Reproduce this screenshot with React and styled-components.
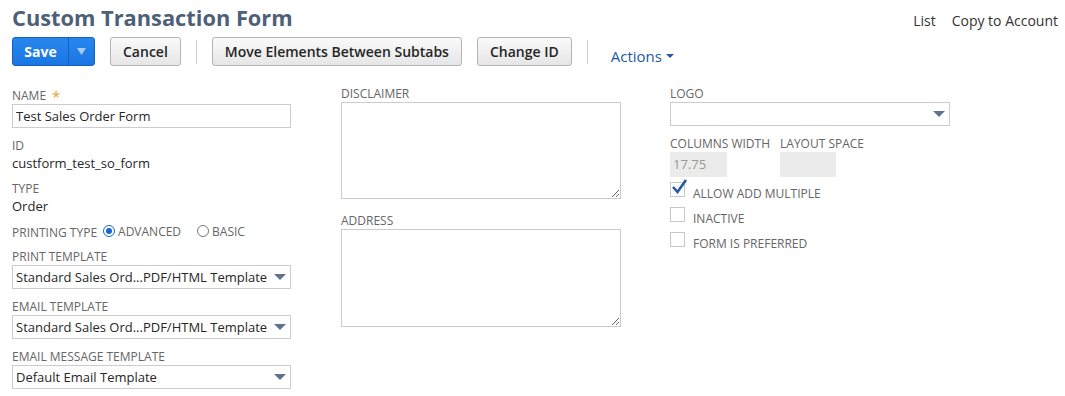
import React from 'react';
import styled, { createGlobalStyle } from 'styled-components';

const GlobalStyle = createGlobalStyle`
  html, body { margin: 0; padding: 0; background: #fff; }
  body { font-family: "Open Sans", sans-serif; color: #262626; }
  * { box-sizing: border-box; }
`;

const Page = styled.div`
  width: 1065px;
  height: 396px;
  padding: 3px 7px 0 12px;
  overflow: hidden;
`;

const Header = styled.div`
  display: flex;
  justify-content: space-between;
  align-items: baseline;
`;

const Title = styled.h1`
  margin: 0;
  font-size: 21.8px;
  line-height: 30px;
  font-weight: 700;
  color: #4d5f79;
`;

const HeaderLinks = styled.div`
  display: flex;
  gap: 16px;
  font-size: 14px;
`;

const HeaderLink = styled.a`
  color: #333;
  text-decoration: none;
`;

const Toolbar = styled.div`
  display: flex;
  align-items: center;
  gap: 15px;
  margin-top: 4px;
  height: 29px;
`;

const SplitButton = styled.div`
  display: flex;
  height: 29px;
  border: 1px solid #1760c2;
  border-radius: 3px;
  background: linear-gradient(#2886ee, #1a76e2);
  overflow: hidden;
`;

const SplitMain = styled.button`
  width: 55px;
  border: none;
  background: transparent;
  color: #fff;
  font-family: "Open Sans", sans-serif;
  font-size: 14px;
  font-weight: 700;
  padding: 0;
  cursor: pointer;
`;

const SplitArrow = styled.button`
  width: 26px;
  border: none;
  border-left: 1px solid #1760c2;
  background: transparent;
  display: flex;
  align-items: center;
  justify-content: center;
  padding: 0;
`;

const Button = styled.button`
  height: 29px;
  padding: 0 12px;
  border: 1px solid #b4b4b4;
  border-radius: 3px;
  background: linear-gradient(#fafafa, #e6e6e6);
  color: #262626;
  font-family: "Open Sans", sans-serif;
  font-size: 14px;
  font-weight: 600;
  cursor: pointer;
`;

const Separator = styled.div`
  width: 1px;
  height: 24px;
  background: #cfcfcf;
`;

const ActionsLink = styled.a`
  display: flex;
  align-items: center;
  gap: 4px;
  margin-left: 8px;
  padding-top: 8px;
  font-size: 15px;
  color: #24589f;
  text-decoration: none;
`;

const FormGrid = styled.div`
  display: grid;
  grid-template-columns: 329px 329px 1fr;
  margin-top: 19px;
`;

const Column = styled.div`
  display: flex;
  flex-direction: column;
  padding-top: ${(p) => p.$offset || 0}px;
`;

const Field = styled.div`
  display: flex;
  flex-direction: column;
  margin-bottom: ${(p) => (p.$gap ?? 9)}px;
`;

const Label = styled.div`
  font-size: 12px;
  line-height: 16px;
  padding-top: 1px;
  color: #666;
  white-space: nowrap;
`;

const Required = styled.span`
  color: #f0a030;
  font-size: 15px;
  line-height: 16px;
  margin-left: 6px;
  vertical-align: top;
`;

const Value = styled.div`
  margin-top: 1px;
  font-size: 13px;
  line-height: 16px;
  color: #262626;
`;

const TextInput = styled.input`
  width: 279px;
  height: 24px;
  border: 1px solid #ccc;
  padding: 0 3px;
  font-family: "Open Sans", sans-serif;
  font-size: 13px;
  color: #262626;
  outline: none;
`;

const SelectBox = styled.div`
  width: ${(p) => p.$width || 279}px;
  height: 24px;
  border: 1px solid #ccc;
  display: flex;
  align-items: center;
  justify-content: space-between;
  padding: 0 4px 0 3px;
  font-size: 13px;
  color: #262626;
  white-space: nowrap;
`;

const TextArea = styled.textarea`
  width: 280px;
  height: ${(p) => p.$height}px;
  border: 1px solid #ccc;
  font-family: "Open Sans", sans-serif;
  font-size: 13px;
  outline: none;
`;

const RadioRow = styled.div`
  display: flex;
  align-items: center;
  height: 16px;
  margin-bottom: 9px;
  font-size: 12px;
  color: #666;
`;

const RadioLabel = styled.span`
  line-height: 16px;
  padding-top: 4px;
  margin-right: 6px;
`;

const RadioOption = styled.label`
  display: flex;
  align-items: center;
  gap: 3px;
  margin-right: ${(p) => p.$spacing || 0}px;
  line-height: 16px;
  padding-top: 1px;
`;

const RadioCircle = styled.span`
  width: 12px;
  height: 12px;
  border-radius: 50%;
  border: ${(p) => (p.$checked ? '1.5px solid #1467cc' : '1px solid #777')};
  display: flex;
  align-items: center;
  justify-content: center;
  margin-top: -2px;
  &::after {
    content: '';
    display: ${(p) => (p.$checked ? 'block' : 'none')};
    width: 6px;
    height: 6px;
    border-radius: 50%;
    background: #1467cc;
  }
`;

const InlineFields = styled.div`
  display: flex;
  gap: 10px;
  margin-bottom: 5px;
`;

const ReadOnlyBox = styled.div`
  width: ${(p) => p.$width}px;
  height: 25px;
  background: #ebebeb;
  font-size: 13px;
  line-height: 25px;
  padding: 0 3px;
  color: #999;
`;

const CheckRow = styled.label`
  display: flex;
  align-items: flex-start;
  gap: 8px;
  height: 25px;
  font-size: 12px;
  color: #666;
`;

const CheckBox = styled.span`
  position: relative;
  width: 15px;
  height: 15px;
  border: 1px solid #c8c8c8;
  background: #fff;
  flex-shrink: 0;
`;

const CheckMark = styled.svg`
  position: absolute;
  left: 0;
  top: -5px;
  overflow: visible;
`;

const CheckText = styled.span`
  margin-top: 4px;
  line-height: 16px;
`;

const DownArrow = ({ color = '#5f7391', w = 12, h = 6 }) => (
  <svg width={w} height={h} viewBox="0 0 12 6">
    <path d="M0 0 L12 0 L6 6 Z" fill={color} />
  </svg>
);

const Select = ({ value, width }) => (
  <SelectBox $width={width}>
    <span>{value}</span>
    <DownArrow />
  </SelectBox>
);

const Checkbox = ({ checked, children }) => (
  <CheckRow>
    <CheckBox>
      {checked && (
        <CheckMark width="16" height="16" viewBox="0 0 16 16">
          <path d="M2 9 L6.5 14 L15 2" fill="none" stroke="#245aa3" strokeWidth="2.6" strokeLinejoin="miter" />
        </CheckMark>
      )}
    </CheckBox>
    <CheckText>{children}</CheckText>
  </CheckRow>
);

export default function App() {
  return (
    <>
      <GlobalStyle />
      <Page>
        <Header>
          <Title>Custom Transaction Form</Title>
          <HeaderLinks>
            <HeaderLink href="#">List</HeaderLink>
            <HeaderLink href="#">Copy to Account</HeaderLink>
          </HeaderLinks>
        </Header>

        <Toolbar>
          <SplitButton>
            <SplitMain>Save</SplitMain>
            <SplitArrow>
              <svg width="9" height="7" viewBox="0 0 9 7">
                <path d="M0 0 L9 0 L4.5 7 Z" fill="#a9c9f2" />
              </svg>
            </SplitArrow>
          </SplitButton>
          <Button>Cancel</Button>
          <Separator />
          <Button>Move Elements Between Subtabs</Button>
          <Button>Change ID</Button>
          <Separator />
          <ActionsLink href="#">
            Actions
            <svg width="8" height="4" viewBox="0 0 8 4">
              <path d="M0 0 L8 0 L4 4 Z" fill="#24589f" />
            </svg>
          </ActionsLink>
        </Toolbar>

        <FormGrid>
          <Column $offset={2}>
            <Field>
              <Label>
                NAME<Required>*</Required>
              </Label>
              <TextInput defaultValue="Test Sales Order Form" />
            </Field>
            <Field>
              <Label>ID</Label>
              <Value>custform_test_so_form</Value>
            </Field>
            <Field>
              <Label>TYPE</Label>
              <Value>Order</Value>
            </Field>
            <RadioRow>
              <RadioLabel>PRINTING TYPE</RadioLabel>
              <RadioOption $spacing={16}>
                <RadioCircle $checked />
                ADVANCED
              </RadioOption>
              <RadioOption>
                <RadioCircle />
                BASIC
              </RadioOption>
            </RadioRow>
            <Field>
              <Label>PRINT TEMPLATE</Label>
              <Select value="Standard Sales Ord...PDF/HTML Template" />
            </Field>
            <Field>
              <Label>EMAIL TEMPLATE</Label>
              <Select value="Standard Sales Ord...PDF/HTML Template" />
            </Field>
            <Field>
              <Label>EMAIL MESSAGE TEMPLATE</Label>
              <Select value="Default Email Template" />
            </Field>
          </Column>

          <Column>
            <Field $gap={13}>
              <Label>DISCLAIMER</Label>
              <TextArea $height={97} />
            </Field>
            <Field>
              <Label>ADDRESS</Label>
              <TextArea $height={98} />
            </Field>
          </Column>

          <Column>
            <Field>
              <Label>LOGO</Label>
              <Select value="" width={280} />
            </Field>
            <InlineFields>
              <Field $gap={0}>
                <Label>COLUMNS WIDTH</Label>
                <ReadOnlyBox $width={57}>17.75</ReadOnlyBox>
              </Field>
              <Field $gap={0}>
                <Label>LAYOUT SPACE</Label>
                <ReadOnlyBox $width={56} />
              </Field>
            </InlineFields>
            <Checkbox checked>ALLOW ADD MULTIPLE</Checkbox>
            <Checkbox>INACTIVE</Checkbox>
            <Checkbox>FORM IS PREFERRED</Checkbox>
          </Column>
        </FormGrid>
      </Page>
    </>
  );
}
